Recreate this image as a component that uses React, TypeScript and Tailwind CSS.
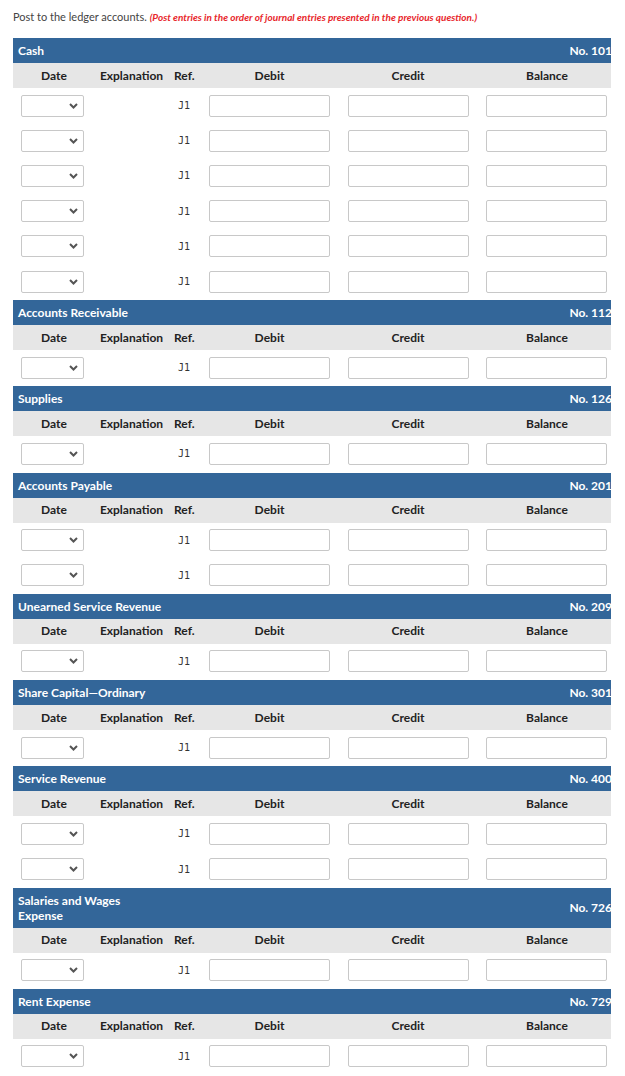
import React from "react";

interface Account {
  name: React.ReactNode;
  no: string;
  rows: number;
}

const accounts: Account[] = [
  { name: "Cash", no: "No. 101", rows: 6 },
  { name: "Accounts Receivable", no: "No. 112", rows: 1 },
  { name: "Supplies", no: "No. 126", rows: 1 },
  { name: "Accounts Payable", no: "No. 201", rows: 2 },
  { name: "Unearned Service Revenue", no: "No. 209", rows: 1 },
  { name: "Share Capital\u2014Ordinary", no: "No. 301", rows: 1 },
  { name: "Service Revenue", no: "No. 400", rows: 2 },
  {
    name: (
      <>
        Salaries and Wages
        <br />
        Expense
      </>
    ),
    no: "No. 726",
    rows: 1,
  },
  { name: "Rent Expense", no: "No. 729", rows: 1 },
];

const cols = "grid grid-cols-[82px_73px_32px_139px_138px_140px]";

const DateSelect = () => (
  <div className="flex h-[22px] w-[63px] items-center justify-end rounded-[2px] border border-[#c8c8c8] bg-white pr-[5px]">
    <svg width="9" height="6" viewBox="0 0 9 6">
      <path d="M1 1l3.5 3.5L8 1" fill="none" stroke="#555" strokeWidth="2" />
    </svg>
  </div>
);

const AmountBox = () => (
  <div className="pl-[9px]">
    <div className="h-[22px] w-[121px] rounded-[2px] border border-[#c8c8c8] bg-white" />
  </div>
);

const LedgerRow = () => (
  <div className={`${cols} h-[35.2px] items-center`}>
    <div className="pl-[8px]">
      <DateSelect />
    </div>
    <div />
    <div className="pl-[10px] font-['DejaVu_Sans_Mono',monospace] text-[10px] text-[#333]">J1</div>
    <AmountBox />
    <AmountBox />
    <AmountBox />
  </div>
);

const LedgerAccount = ({ account }: { account: Account }) => (
  <div className="pb-[1px]">
    <div className="flex items-center justify-between bg-[#336699] px-[5px] py-[5px] text-[12px] font-bold leading-[15px] text-white">
      <span className="whitespace-nowrap">{account.name}</span>
      <span className="whitespace-nowrap">{account.no}</span>
    </div>
    <div className={`${cols} h-[25px] items-center bg-[#e6e6e6] text-[12px] font-bold text-[#222]`}>
      <div className="text-center">Date</div>
      <div className="text-center">Explanation</div>
      <div className="pl-[6px]">Ref.</div>
      <div className="text-center">Debit</div>
      <div className="text-center">Credit</div>
      <div className="text-center">Balance</div>
    </div>
    {Array.from({ length: account.rows }).map((_, i) => (
      <LedgerRow key={i} />
    ))}
  </div>
);

export default function App() {
  return (
    <div className="min-h-[1076px] w-[625px] bg-white pl-[13px] font-['Lato',sans-serif]">
      <p className="pt-[10px] pb-[14px] text-[11px] leading-[14px] text-[#444]">
        Post to the ledger accounts.{" "}
        <span className="text-[10px] font-bold italic text-[#e8262b]">
          (Post entries in the order of journal entries presented in the previous question.)
        </span>
      </p>
      <div className="w-[598px] overflow-hidden">
        <div className="w-[604px]">
          {accounts.map((a) => (
            <LedgerAccount key={a.no} account={a} />
          ))}
        </div>
      </div>
    </div>
  );
}
